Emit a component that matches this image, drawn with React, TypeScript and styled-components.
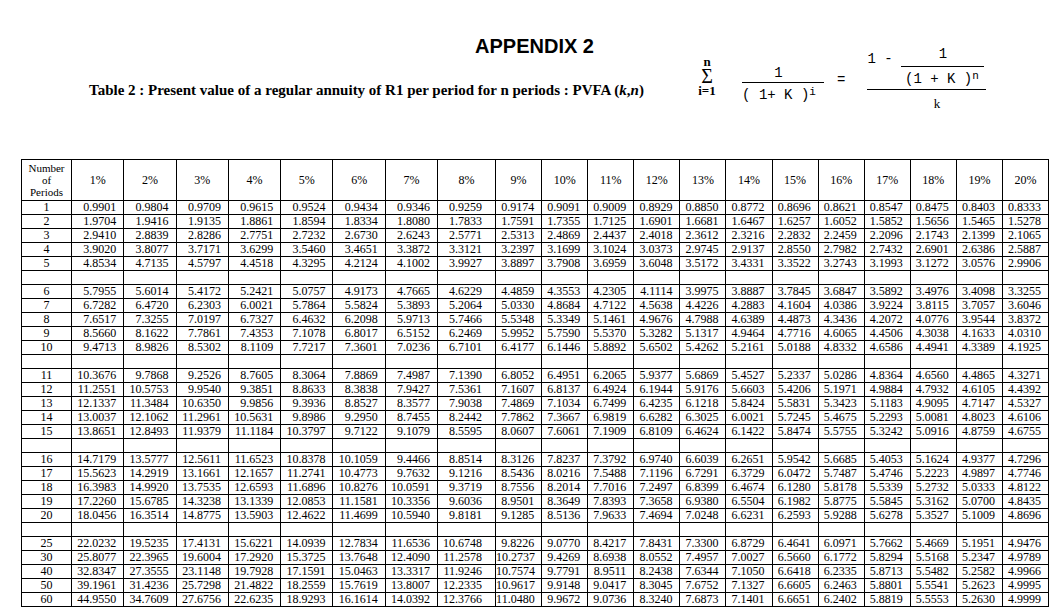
import { Fragment } from "react";
import styled, { createGlobalStyle } from "styled-components";

const GlobalStyle = createGlobalStyle`
  body {
    margin: 0;
    background: #fff;
    color: #000;
  }
`;

const rates = Array.from({ length: 20 }, (_, i) => `${i + 1}%`);

// column widths follow the original sheet: 1-7% wide, 8% wider, 9-20% narrow
const colWidth = (i: number) => (i < 7 ? 52.3 : i === 7 ? 58 : 46.08);
const padRight = (i: number) => (i === 7 ? 13 : 7);

const raw: [number, string][][] = [
  [
    [1, "0.9901 0.9804 0.9709 0.9615 0.9524 0.9434 0.9346 0.9259 0.9174 0.9091 0.9009 0.8929 0.8850 0.8772 0.8696 0.8621 0.8547 0.8475 0.8403 0.8333"],
    [2, "1.9704 1.9416 1.9135 1.8861 1.8594 1.8334 1.8080 1.7833 1.7591 1.7355 1.7125 1.6901 1.6681 1.6467 1.6257 1.6052 1.5852 1.5656 1.5465 1.5278"],
    [3, "2.9410 2.8839 2.8286 2.7751 2.7232 2.6730 2.6243 2.5771 2.5313 2.4869 2.4437 2.4018 2.3612 2.3216 2.2832 2.2459 2.2096 2.1743 2.1399 2.1065"],
    [4, "3.9020 3.8077 3.7171 3.6299 3.5460 3.4651 3.3872 3.3121 3.2397 3.1699 3.1024 3.0373 2.9745 2.9137 2.8550 2.7982 2.7432 2.6901 2.6386 2.5887"],
    [5, "4.8534 4.7135 4.5797 4.4518 4.3295 4.2124 4.1002 3.9927 3.8897 3.7908 3.6959 3.6048 3.5172 3.4331 3.3522 3.2743 3.1993 3.1272 3.0576 2.9906"],
  ],
  [
    [6, "5.7955 5.6014 5.4172 5.2421 5.0757 4.9173 4.7665 4.6229 4.4859 4.3553 4.2305 4.1114 3.9975 3.8887 3.7845 3.6847 3.5892 3.4976 3.4098 3.3255"],
    [7, "6.7282 6.4720 6.2303 6.0021 5.7864 5.5824 5.3893 5.2064 5.0330 4.8684 4.7122 4.5638 4.4226 4.2883 4.1604 4.0386 3.9224 3.8115 3.7057 3.6046"],
    [8, "7.6517 7.3255 7.0197 6.7327 6.4632 6.2098 5.9713 5.7466 5.5348 5.3349 5.1461 4.9676 4.7988 4.6389 4.4873 4.3436 4.2072 4.0776 3.9544 3.8372"],
    [9, "8.5660 8.1622 7.7861 7.4353 7.1078 6.8017 6.5152 6.2469 5.9952 5.7590 5.5370 5.3282 5.1317 4.9464 4.7716 4.6065 4.4506 4.3038 4.1633 4.0310"],
    [10, "9.4713 8.9826 8.5302 8.1109 7.7217 7.3601 7.0236 6.7101 6.4177 6.1446 5.8892 5.6502 5.4262 5.2161 5.0188 4.8332 4.6586 4.4941 4.3389 4.1925"],
  ],
  [
    [11, "10.3676 9.7868 9.2526 8.7605 8.3064 7.8869 7.4987 7.1390 6.8052 6.4951 6.2065 5.9377 5.6869 5.4527 5.2337 5.0286 4.8364 4.6560 4.4865 4.3271"],
    [12, "11.2551 10.5753 9.9540 9.3851 8.8633 8.3838 7.9427 7.5361 7.1607 6.8137 6.4924 6.1944 5.9176 5.6603 5.4206 5.1971 4.9884 4.7932 4.6105 4.4392"],
    [13, "12.1337 11.3484 10.6350 9.9856 9.3936 8.8527 8.3577 7.9038 7.4869 7.1034 6.7499 6.4235 6.1218 5.8424 5.5831 5.3423 5.1183 4.9095 4.7147 4.5327"],
    [14, "13.0037 12.1062 11.2961 10.5631 9.8986 9.2950 8.7455 8.2442 7.7862 7.3667 6.9819 6.6282 6.3025 6.0021 5.7245 5.4675 5.2293 5.0081 4.8023 4.6106"],
    [15, "13.8651 12.8493 11.9379 11.1184 10.3797 9.7122 9.1079 8.5595 8.0607 7.6061 7.1909 6.8109 6.4624 6.1422 5.8474 5.5755 5.3242 5.0916 4.8759 4.6755"],
  ],
  [
    [16, "14.7179 13.5777 12.5611 11.6523 10.8378 10.1059 9.4466 8.8514 8.3126 7.8237 7.3792 6.9740 6.6039 6.2651 5.9542 5.6685 5.4053 5.1624 4.9377 4.7296"],
    [17, "15.5623 14.2919 13.1661 12.1657 11.2741 10.4773 9.7632 9.1216 8.5436 8.0216 7.5488 7.1196 6.7291 6.3729 6.0472 5.7487 5.4746 5.2223 4.9897 4.7746"],
    [18, "16.3983 14.9920 13.7535 12.6593 11.6896 10.8276 10.0591 9.3719 8.7556 8.2014 7.7016 7.2497 6.8399 6.4674 6.1280 5.8178 5.5339 5.2732 5.0333 4.8122"],
    [19, "17.2260 15.6785 14.3238 13.1339 12.0853 11.1581 10.3356 9.6036 8.9501 8.3649 7.8393 7.3658 6.9380 6.5504 6.1982 5.8775 5.5845 5.3162 5.0700 4.8435"],
    [20, "18.0456 16.3514 14.8775 13.5903 12.4622 11.4699 10.5940 9.8181 9.1285 8.5136 7.9633 7.4694 7.0248 6.6231 6.2593 5.9288 5.6278 5.3527 5.1009 4.8696"],
  ],
  [
    [25, "22.0232 19.5235 17.4131 15.6221 14.0939 12.7834 11.6536 10.6748 9.8226 9.0770 8.4217 7.8431 7.3300 6.8729 6.4641 6.0971 5.7662 5.4669 5.1951 4.9476"],
    [30, "25.8077 22.3965 19.6004 17.2920 15.3725 13.7648 12.4090 11.2578 10.2737 9.4269 8.6938 8.0552 7.4957 7.0027 6.5660 6.1772 5.8294 5.5168 5.2347 4.9789"],
    [40, "32.8347 27.3555 23.1148 19.7928 17.1591 15.0463 13.3317 11.9246 10.7574 9.7791 8.9511 8.2438 7.6344 7.1050 6.6418 6.2335 5.8713 5.5482 5.2582 4.9966"],
    [50, "39.1961 31.4236 25.7298 21.4822 18.2559 15.7619 13.8007 12.2335 10.9617 9.9148 9.0417 8.3045 7.6752 7.1327 6.6605 6.2463 5.8801 5.5541 5.2623 4.9995"],
    [60, "44.9550 34.7609 27.6756 22.6235 18.9293 16.1614 14.0392 12.3766 11.0480 9.9672 9.0736 8.3240 7.6873 7.1401 6.6651 6.2402 5.8819 5.5553 5.2630 4.9999"],
  ],
];

const groups = raw.map((g) => g.map(([n, line]) => ({ n, values: line.split(" ") })));

const Page = styled.div`
  width: 1055px;
  height: 616px;
  overflow: hidden;
  background: #fff;
`;

const Title = styled.h1`
  margin: 0;
  padding: 35px 0 0 14px;
  text-align: center;
  font: bold 20px/23px "Liberation Sans", Arial, sans-serif;
`;

const Intro = styled.div`
  display: flex;
  align-items: flex-start;
  height: 114px;
  margin-top: -13px;
`;

const Caption = styled.p`
  flex: none;
  width: 697px;
  margin: 37px 0 0;
  padding-left: 89px;
  box-sizing: border-box;
  white-space: nowrap;
  font: bold 15px/17px "Liberation Serif", "Times New Roman", serif;

  i {
    font-style: italic;
  }
`;

const Formula = styled.div`
  display: flex;
  align-items: flex-start;
  font: 14px/16px "Liberation Mono", "Courier New", monospace;
`;

const SigmaBlock = styled.div`
  display: flex;
  flex-direction: column;
  align-items: center;
  width: 20px;
  margin-top: 10px;
  font-family: "Liberation Serif", "Times New Roman", serif;
`;

const Limit = styled.span`
  font-size: 13px;
  font-weight: bold;
  line-height: 13px;
`;

const SigmaSign = styled.span`
  font-size: 20px;
  line-height: 16px;
`;

const Fraction = styled.div<{ $width: number; $top: number; $left: number }>`
  display: flex;
  flex-direction: column;
  width: ${(p) => p.$width}px;
  margin-top: ${(p) => p.$top}px;
  margin-left: ${(p) => p.$left}px;
`;

const FracPart = styled.div<{ $gap?: number; $shift?: number }>`
  margin-top: ${(p) => p.$gap ?? 0}px;
  padding-left: ${(p) => Math.max(p.$shift ?? 0, 0)}px;
  padding-right: ${(p) => Math.max(-(p.$shift ?? 0), 0)}px;
  text-align: center;
  white-space: pre;
`;

const NumRow = styled.div`
  display: flex;
  align-items: flex-start;
`;

const Lead = styled.span`
  width: 34px;
  margin-top: 4.5px;
  white-space: pre;
`;

const Bar = styled.div<{ $gap: number }>`
  height: 1px;
  margin-top: ${(p) => p.$gap}px;
  background: #000;
`;

const Sup = styled.span`
  font-size: 11px;
  line-height: 11px;
  vertical-align: top;
`;

const Equals = styled.span`
  margin: 27px 0 0 13px;
`;

const SerifK = styled.span`
  font: 13px/15px "Liberation Serif", "Times New Roman", serif;
`;

const Table = styled.table`
  border-collapse: collapse;
  table-layout: fixed;
  width: 1027px;
  margin-left: 21px;
  font-family: "Liberation Serif", "Times New Roman", serif;
  color: #000;
`;

const Col = styled.col<{ $w: number }>`
  width: ${(p) => p.$w}px;
`;

const HeadCell = styled.th`
  height: 40px;
  padding: 0;
  border: 1px solid #000;
  font-weight: normal;
  font-size: 12px;
  line-height: 12px;
  text-align: center;
  vertical-align: middle;
`;

const PeriodHead = styled(HeadCell)`
  font-size: 11px;
  line-height: 12px;
`;

const Cell = styled.td`
  height: 13px;
  padding: 0;
  border: 1px solid #000;
  font-size: 12px;
  line-height: 13px;
  white-space: nowrap;
  overflow: hidden;
`;

const PeriodCell = styled(Cell)`
  text-align: center;
`;

const ValueCell = styled(Cell)<{ $pad: number }>`
  padding-right: ${(p) => p.$pad}px;
  text-align: right;
`;

const BlankRow = () => (
  <tr>
    <PeriodCell />
    {rates.map((r, i) => (
      <ValueCell key={r} $pad={padRight(i)} />
    ))}
  </tr>
);

export default function App() {
  return (
    <Page>
      <GlobalStyle />
      <Title>APPENDIX 2</Title>
      <Intro>
        <Caption>
          Table 2 : Present value of a regular annuity of R1 per period for n periods : PVFA (<i>k</i>,<i>n</i>)
        </Caption>
        <Formula>
          <SigmaBlock>
            <Limit>n</Limit>
            <SigmaSign>Σ</SigmaSign>
            <Limit>i=1</Limit>
          </SigmaBlock>
          <Fraction $width={82} $top={20} $left={25}>
            <FracPart $shift={-9}>1</FracPart>
            <Bar $gap={1} />
            <FracPart $gap={4} $shift={-8}>
              ( 1+ K )<Sup>i</Sup>
            </FracPart>
          </Fraction>
          <Equals>=</Equals>
          <Fraction $width={119} $top={1} $left={22}>
            <NumRow>
              <Lead>1 -</Lead>
              <Fraction $width={83} $top={0} $left={0}>
                <FracPart>1</FracPart>
                <Bar $gap={4} />
                <FracPart $gap={4} $shift={-2}>
                  (1 + K )<Sup>n</Sup>
                </FracPart>
              </Fraction>
            </NumRow>
            <Bar $gap={2} />
            <FracPart $gap={6} $shift={20}>
              <SerifK>k</SerifK>
            </FracPart>
          </Fraction>
        </Formula>
      </Intro>
      <Table>
        <colgroup>
          <Col $w={50} />
          {rates.map((r, i) => (
            <Col key={r} $w={colWidth(i)} />
          ))}
        </colgroup>
        <thead>
          <tr>
            <PeriodHead>
              Number
              <br />
              of
              <br />
              Periods
            </PeriodHead>
            {rates.map((r) => (
              <HeadCell key={r}>{r}</HeadCell>
            ))}
          </tr>
        </thead>
        <tbody>
          {groups.map((group, gi) => (
            <Fragment key={gi}>
              {gi > 0 && <BlankRow />}
              {group.map((row) => (
                <tr key={row.n}>
                  <PeriodCell>{row.n}</PeriodCell>
                  {row.values.map((v, i) => (
                    <ValueCell key={i} $pad={padRight(i)}>
                      {v}
                    </ValueCell>
                  ))}
                </tr>
              ))}
            </Fragment>
          ))}
        </tbody>
      </Table>
    </Page>
  );
}
